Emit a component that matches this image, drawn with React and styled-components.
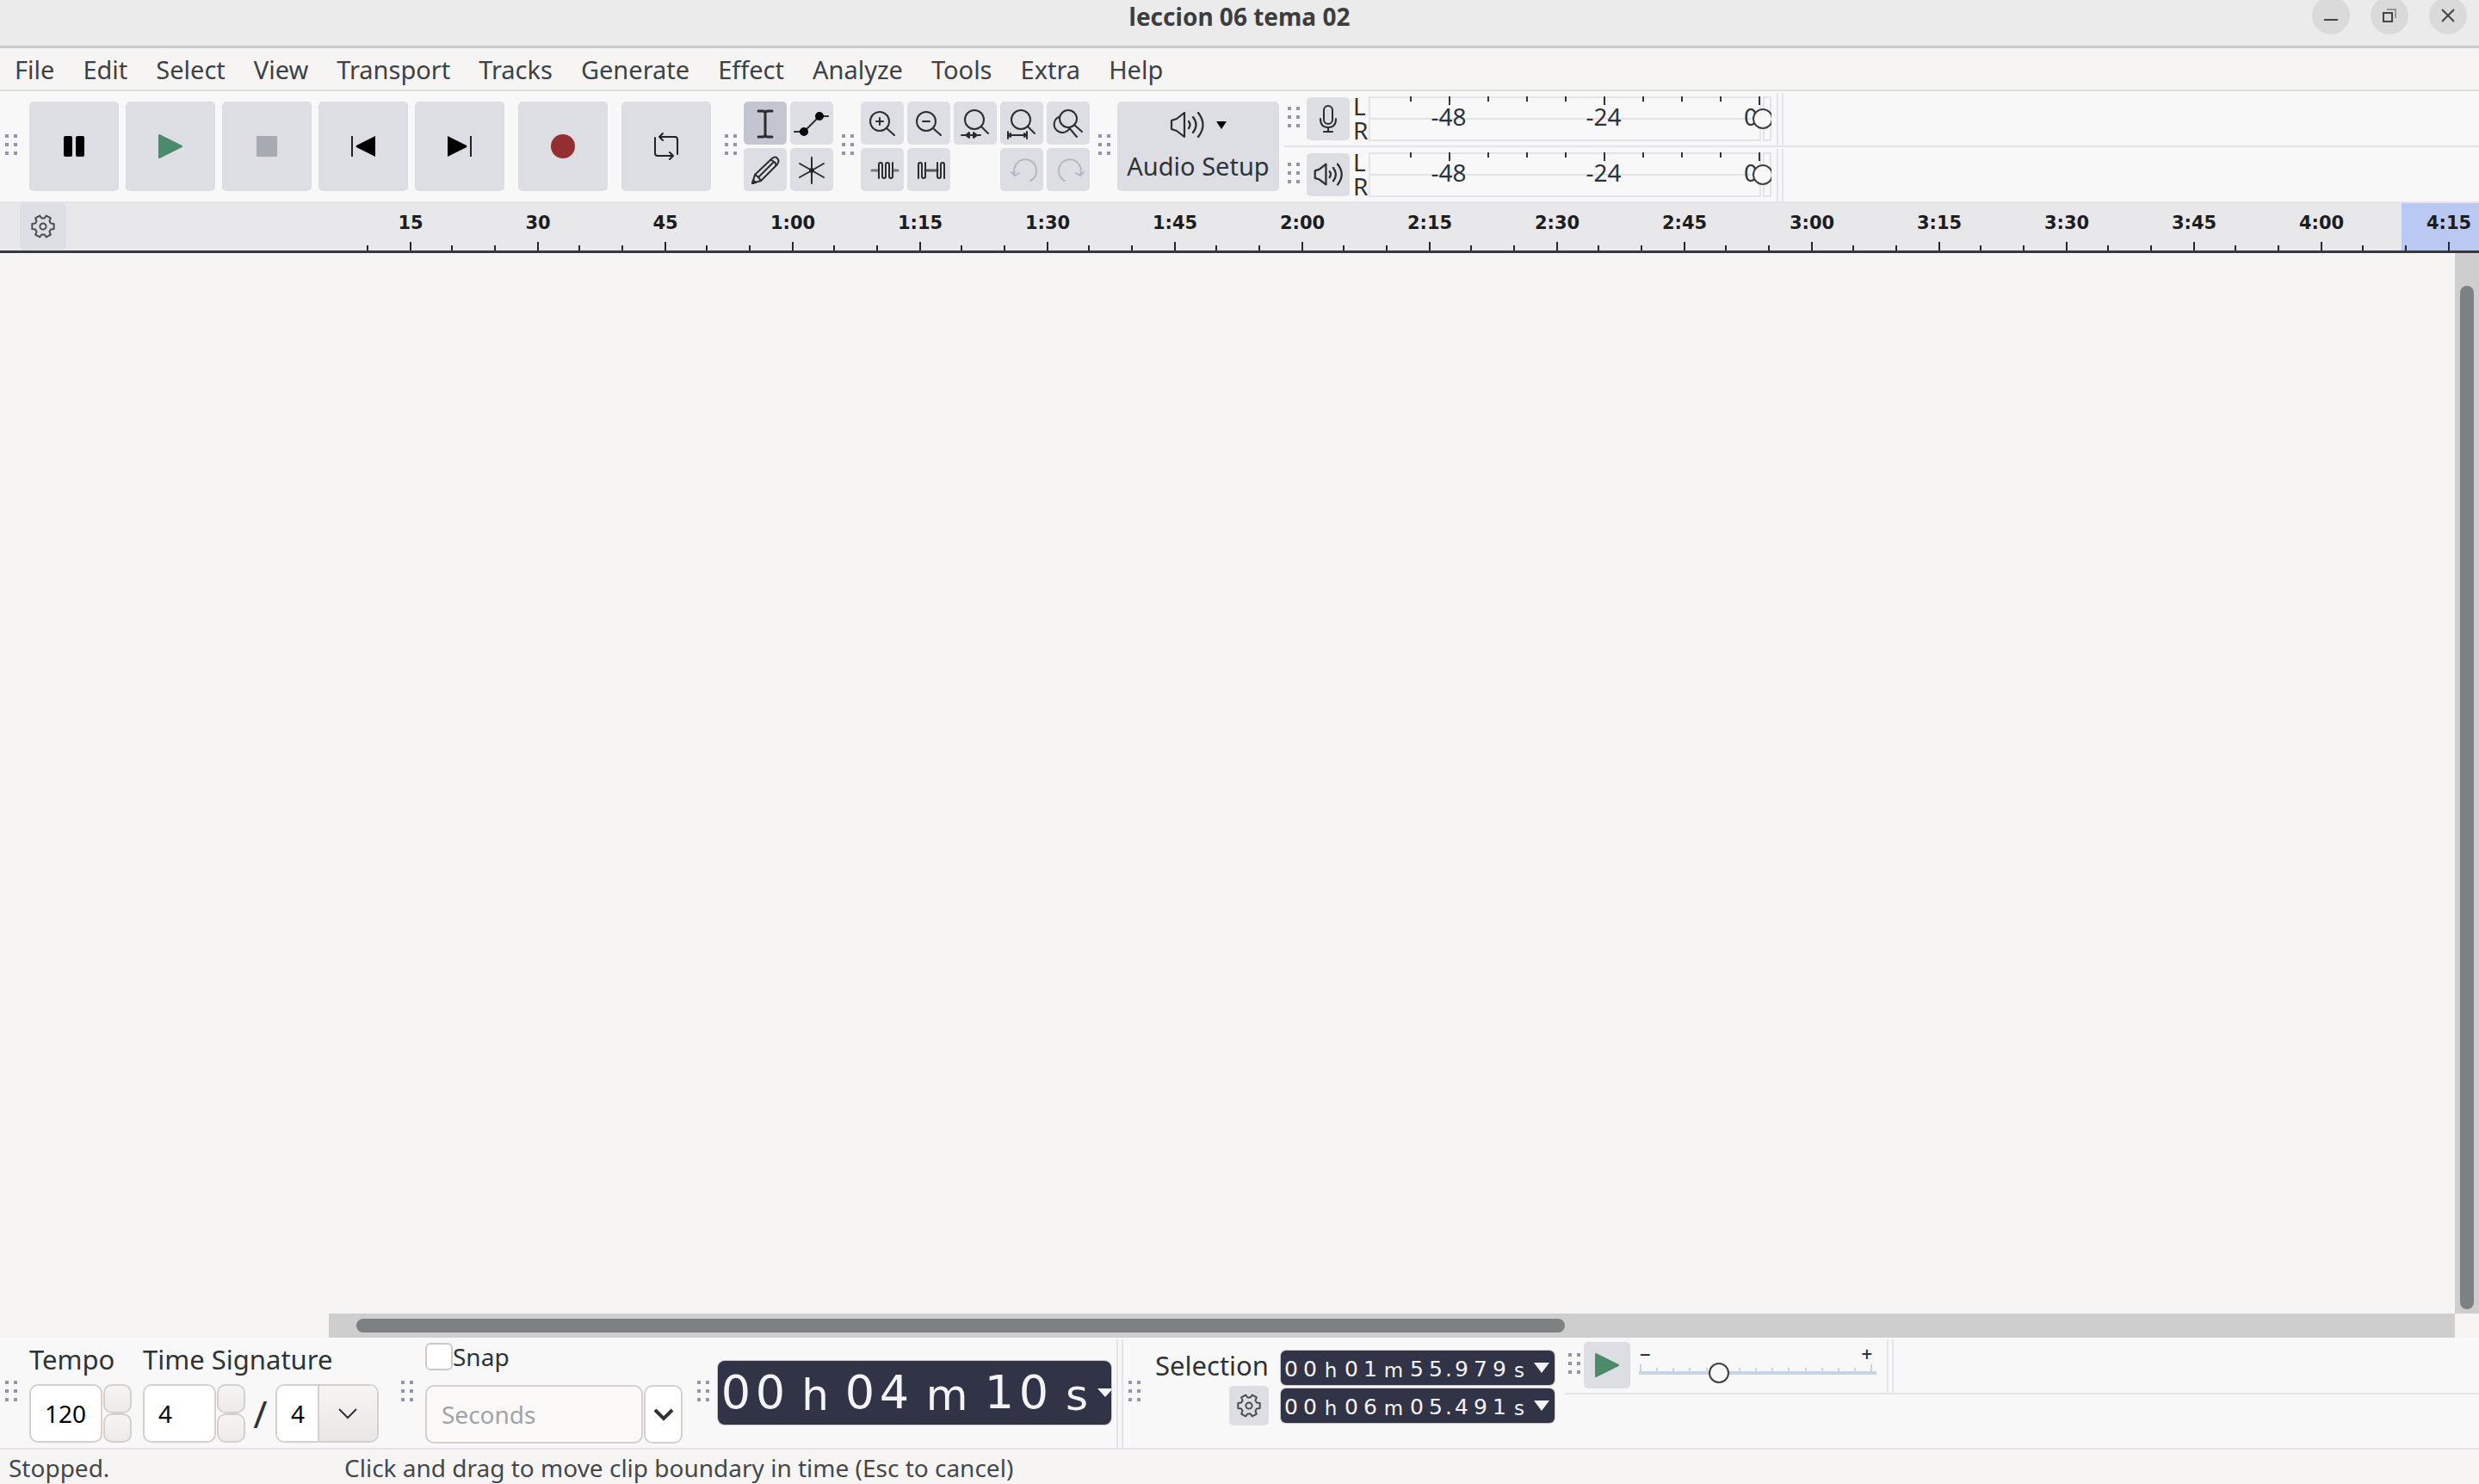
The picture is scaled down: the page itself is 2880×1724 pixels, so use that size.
import React, { useState } from "react"
import styled, { createGlobalStyle, css } from "styled-components"

const GlobalStyle = createGlobalStyle`
    * {
        box-sizing: border-box;
    }

    body {
        margin: 0;
        font-family: "Noto Sans", "Open Sans", sans-serif;
        font-size: 28px;
        line-height: 40px;
        color: #2e3436;
        background: #f6f5f3;
    }

    button,
    input,
    select {
        font: inherit;
        color: inherit;
        margin: 0;
    }
`

const menuItems = [
    "File",
    "Edit",
    "Select",
    "View",
    "Transport",
    "Tracks",
    "Generate",
    "Effect",
    "Analyze",
    "Tools",
    "Extra",
    "Help",
]

const rulerLabels = [
    "15",
    "30",
    "45",
    "1:00",
    "1:15",
    "1:30",
    "1:45",
    "2:00",
    "2:15",
    "2:30",
    "2:45",
    "3:00",
    "3:15",
    "3:30",
    "3:45",
    "4:00",
    "4:15",
]

// Six lobed outline, lobes on the horizontal axis
const gearPoints = [0, 60, 120, 180, 240, 300]
    .flatMap((angle) => [
        [angle - 21, 9.6],
        [angle - 13, 13],
        [angle + 13, 13],
        [angle + 21, 9.6],
    ])
    .map(([angle, radius]) => {
        const rad = (angle * Math.PI) / 180
        return `${(15 + radius * Math.cos(rad)).toFixed(2)},${(15 + radius * Math.sin(rad)).toFixed(2)}`
    })
    .join(" ")

/* Icons */

const GearIcon = () => (
    <svg width="30" height="30" fill="none" stroke="#4b4d52" strokeWidth="2" strokeLinejoin="round">
        <polygon points={gearPoints} />
        <circle cx="15" cy="15" r="3.6" />
    </svg>
)

const PauseIcon = () => (
    <svg width="32" height="32">
        <rect x="4" y="4" width="10" height="24" rx="2" />
        <rect x="18" y="4" width="10" height="24" rx="2" />
    </svg>
)

const PlayIcon = () => (
    <svg width="32" height="32">
        <path d="M3 3L29 16L3 29Z" fill="#4c8a6c" stroke="#4c8a6c" strokeWidth="2" strokeLinejoin="round" />
    </svg>
)

const StopIcon = () => (
    <svg width="32" height="32">
        <rect x="4" y="4" width="24" height="24" rx="1" fill="#a5aab3" />
    </svg>
)

const SkipIcon = ({ back }) => (
    <svg width="32" height="32">
        <g transform={back ? "translate(32 0) scale(-1 1)" : undefined}>
            <path d="M2 4L24 15Q25 16 24 17L2 28Z" />
            <path d="M29 4V28" stroke="#222" strokeWidth="2" />
        </g>
    </svg>
)

const RecordIcon = () => (
    <svg width="32" height="32">
        <circle cx="16" cy="16" r="14" fill="#942f2f" />
    </svg>
)

const LoopIcon = () => (
    <svg width="32" height="34" fill="none" stroke="#222" strokeWidth="2" strokeLinecap="round" strokeLinejoin="round">
        <path d="M3 7V25Q3 28 6 28H23" />
        <path d="M20 24L24 28L20 32" />
        <path d="M29 26V9Q29 6 26 6H9" />
        <path d="M12 2L8 6L12 10" />
    </svg>
)

const ToolSvg = styled.svg`
    display: block;
    width: 50px;
    height: 50px;
    fill: none;
    stroke: ${(p) => (p.$muted ? "#b3b9c2" : "#2b2c30")};
    stroke-width: 2;
    stroke-linecap: round;
    stroke-linejoin: round;
`

const SelectionToolIcon = () => (
    <ToolSvg>
        <path d="M17 11H22Q25 11 25 14V38Q25 41 22 41H17M33 11H28Q25 11 25 14M33 41H28Q25 41 25 38" strokeWidth="3" />
    </ToolSvg>
)

const EnvelopeIcon = () => (
    <ToolSvg>
        <path d="M5 35H16L34 17H44" />
        <circle cx="16" cy="35" r="4" fill="#000" stroke="#000" />
        <circle cx="34" cy="17" r="4" fill="#000" stroke="#000" />
    </ToolSvg>
)

const PencilIcon = () => (
    <ToolSvg>
        <path d="M10 41L13 31L33 12Q37 9 39 12Q42 15 39 19L20 38Z" />
        <path d="M13 31L16 33L18 35L20 38M17 34L34 17M31 14Q34 14 35 16Q38 17 37 20" />
        <path d="M10 41L11 37L14 40Z" fill="#2b2c30" />
    </ToolSvg>
)

const MultiToolIcon = () => (
    <ToolSvg>
        <path d="M25 11V41M11 18L39 34M11 34L39 18" />
        <circle cx="25" cy="26" r="2" fill="#000" />
    </ToolSvg>
)

const ZoomIcon = ({ kind }) => (
    <ToolSvg>
        {(kind === "in" || kind === "out") && (
            <>
                <circle cx="22" cy="23" r="11" />
                <path d="M30 31L39 39M18 23H26" />
                {kind === "in" && <path d="M22 19V27" />}
            </>
        )}
        {(kind === "selection" || kind === "project") && (
            <>
                <circle cx="24" cy="21" r="11" />
                <path d="M32 29L40 37" />
            </>
        )}
        {kind === "selection" && (
            <>
                <path d="M9 39H31" />
                <path d="M14 39L18 36V42ZM27 39L23 36V42Z" fill="#2b2c30" />
            </>
        )}
        {kind === "project" && (
            <>
                <path d="M9 35V43M31 35V43M9 39H31" />
                <path d="M10 39L12 37V41ZM30 39L28 37V41Z" fill="#2b2c30" />
            </>
        )}
        {kind === "toggle" && (
            <>
                <circle cx="25" cy="20" r="10" />
                <path d="M32 27L41 35M15 17.5A9.5 9.5 0 1 0 26.5 31L35 41M27 31V30" />
            </>
        )}
    </ToolSvg>
)

const TrimIcon = () => (
    <ToolSvg>
        <path d="M13 26H20M39 26H43" stroke="#77787c" strokeWidth="3" />
        <path d="M21 35V19Q21 17 23 17Q25 17 25 19V33Q25 35 27 35Q29 35 29 33V19Q29 17 31 17Q33 17 33 19V33Q33 35 35 35Q37 35 37 33V17" />
    </ToolSvg>
)

const SilenceIcon = () => (
    <ToolSvg>
        <path d="M21 26H35" stroke="#55565a" strokeWidth="3" />
        <path d="M13 35V19Q13 17 15 17Q17 17 17 19V33Q17 35 19 35Q21 35 21 33V17" />
        <path d="M35 17V33Q35 35 37 35Q39 35 39 33V19Q39 17 41 17Q43 17 43 19V35" />
    </ToolSvg>
)

const UndoIcon = ({ redo }) => (
    <ToolSvg $muted>
        <g transform={redo ? "translate(56 0) scale(-1 1)" : undefined}>
            <path d="M35 38A13 13 0 1 0 17 31" />
            <path d="M13 28L17 32L22 29" />
        </g>
    </ToolSvg>
)

const SpeakerIcon = ({ size = 40 }) => (
    <svg
        width={size}
        height={(size * 4) / 5}
        viewBox="0 0 40 32"
        fill="none"
        stroke="#2b2c30"
        strokeWidth={size < 40 ? 2.6 : 2.2}
        strokeLinecap="round"
        strokeLinejoin="round"
    >
        <path d="M2 11L8 9L17 2V30L8 23L2 21Z" />
        <path d="M22 12Q25 16 22 20M27 7Q34 16 27 25M33 2Q44 16 33 30" />
    </svg>
)

const MicIcon = () => (
    <svg width="22" height="34" fill="none" stroke="#2b2c30" strokeWidth="2" strokeLinecap="round">
        <rect x="6" y="2" width="10" height="21" rx="5" />
        <path d="M2 17Q2 27 11 27Q20 27 20 17M11 27V32M6 32H16" />
    </svg>
)

const CaretIcon = ({ width, height, color = "#000" }) => (
    <svg width={width} height={height} viewBox="0 0 20 10" preserveAspectRatio="none">
        <path d="M0 0H20L10 10Z" fill={color} />
    </svg>
)

const ChevronIcon = ({ bold }) => (
    <svg width="24" height="18" fill="none" stroke="#2e3436" strokeWidth={bold ? 4 : 2}>
        <path d="M2 4L12 14L22 4" />
    </svg>
)

/* Small building blocks */

const GripDots = () => (
    <Grip aria-hidden="true">
        <span />
        <span />
        <span />
        <span />
        <span />
        <span />
    </Grip>
)

const Meter = ({ name, icon }) => {
    const [level, setLevel] = useState(100)

    return (
        <>
            <GripDots />
            <FlatButton aria-label={name} $size={50}>
                {icon}
            </FlatButton>
            <Channels>
                <span>L</span>
                <span>R</span>
            </Channels>
            <MeterArea>
                <svg width="468" height="52">
                    <path d="M1 1H455V51H1ZM1 26H455M459 1H467V51H459Z" fill="none" stroke="#e3e3e8" strokeWidth="2" />
                    {Array.from({ length: 10 }, (_, i) => (
                        <rect key={i} x={48 + i * 45} y="0" width="2" height={i % 4 === 1 ? 10 : 6} fill="#333" />
                    ))}
                    <text x="93" y="34" textAnchor="middle">
                        -48
                    </text>
                    <text x="273" y="34" textAnchor="middle">
                        -24
                    </text>
                    <text x="444" y="34" textAnchor="middle">
                        0
                    </text>
                </svg>
                <MeterSlider
                    type="range"
                    aria-label={`${name} volume`}
                    value={level}
                    onChange={(e) => setLevel(Number(e.target.value))}
                />
            </MeterArea>
        </>
    )
}

const TimeDisplay = ({ value, label, large }) => (
    <TimeBox $large={large} role="group" aria-label={label}>
        {value.split("").map((char, index) => (
            <TimeCell key={index} $char={char} $large={large}>
                {char}
            </TimeCell>
        ))}
        <TimeMenu aria-label={`${label} format`} $large={large}>
            <CaretIcon width={18} height={large ? 10 : 12} color="#f4f4f6" />
        </TimeMenu>
    </TimeBox>
)

const Spinner = ({ id, value, onChange }) => (
    <SpinRow>
        <SpinInput id={id} value={value} onChange={(e) => onChange(e.target.value)} />
        <Steppers>
            <StepButton aria-label="Increase" onClick={() => onChange(Number(value) + 1)} />
            <StepButton aria-label="Decrease" onClick={() => onChange(Number(value) - 1)} />
        </Steppers>
    </SpinRow>
)

const App = () => {
    const [tempo, setTempo] = useState(120)
    const [upper, setUpper] = useState(4)
    const [lower, setLower] = useState(4)
    const [snap, setSnap] = useState(false)
    const [speed, setSpeed] = useState(32)

    return (
        <Window>
            <GlobalStyle />

            <TitleBar>
                <Title>leccion 06 tema 02</Title>
                <WindowButtons>
                    <WindowButton aria-label="Minimize">
                        <svg width="20" height="20">
                            <path d="M2 15H18" stroke="#444" strokeWidth="2" />
                        </svg>
                    </WindowButton>
                    <WindowButton aria-label="Restore">
                        <svg width="20" height="20" fill="none" strokeWidth="2">
                            <path d="M7 3H17V13" stroke="#999" />
                            <path d="M3 7H13V17H3Z" stroke="#444" />
                        </svg>
                    </WindowButton>
                    <WindowButton aria-label="Close">
                        <svg width="20" height="20">
                            <path d="M3 3L17 17M17 3L3 17" stroke="#444" strokeWidth="2" />
                        </svg>
                    </WindowButton>
                </WindowButtons>
            </TitleBar>

            <MenuBar>
                {menuItems.map((item) => (
                    <MenuButton key={item}>{item}</MenuButton>
                ))}
            </MenuBar>

            <Dock>
                <GripDots />
                <Transport>
                    <ButtonRun>
                        <TransportButton aria-label="Pause">
                            <PauseIcon />
                        </TransportButton>
                        <TransportButton aria-label="Play">
                            <PlayIcon />
                        </TransportButton>
                        <TransportButton aria-label="Stop" disabled>
                            <StopIcon />
                        </TransportButton>
                        <TransportButton aria-label="Skip to start">
                            <SkipIcon back />
                        </TransportButton>
                        <TransportButton aria-label="Skip to end">
                            <SkipIcon />
                        </TransportButton>
                    </ButtonRun>
                    <TransportButton aria-label="Record">
                        <RecordIcon />
                    </TransportButton>
                    <TransportButton aria-label="Loop">
                        <LoopIcon />
                    </TransportButton>
                </Transport>

                <GripDots />
                <ToolGrid $columns={2}>
                    <FlatButton aria-label="Selection tool" $size={50} $active>
                        <SelectionToolIcon />
                    </FlatButton>
                    <FlatButton aria-label="Envelope tool" $size={50}>
                        <EnvelopeIcon />
                    </FlatButton>
                    <FlatButton aria-label="Draw tool" $size={50}>
                        <PencilIcon />
                    </FlatButton>
                    <FlatButton aria-label="Multi-tool" $size={50}>
                        <MultiToolIcon />
                    </FlatButton>
                </ToolGrid>

                <GripDots />
                <ToolGrid $columns={5}>
                    {["in", "out", "selection", "project", "toggle"].map((kind) => (
                        <FlatButton key={kind} aria-label={`Zoom ${kind}`} $size={50}>
                            <ZoomIcon kind={kind} />
                        </FlatButton>
                    ))}
                    <FlatButton aria-label="Trim" $size={50}>
                        <TrimIcon />
                    </FlatButton>
                    <FlatButton aria-label="Silence" $size={50}>
                        <SilenceIcon />
                    </FlatButton>
                    <span />
                    <FlatButton aria-label="Undo" $size={50} disabled>
                        <UndoIcon />
                    </FlatButton>
                    <FlatButton aria-label="Redo" $size={50} disabled>
                        <UndoIcon redo />
                    </FlatButton>
                </ToolGrid>

                <GripDots />
                <AudioSetup>
                    <AudioSetupIcons>
                        <SpeakerIcon />
                        <CaretIcon width={12} height={9} />
                    </AudioSetupIcons>
                    Audio Setup
                </AudioSetup>

                <MeterDock>
                    <MeterRow>
                        <Meter name="Record meter" icon={<MicIcon />} />
                        <DockEnd />
                    </MeterRow>
                    <MeterRow>
                        <Meter name="Playback meter" icon={<SpeakerIcon size={34} />} />
                        <DockEnd />
                    </MeterRow>
                </MeterDock>
            </Dock>

            <Ruler>
                <RulerHead>
                    <FlatButton aria-label="Timeline options" $size={54}>
                        <GearIcon />
                    </FlatButton>
                </RulerHead>
                {rulerLabels.map((label) => (
                    <RulerCell key={label}>
                        {label}
                        <svg width="148" height="10" fill="#26272b">
                            <rect x="23" y="4" width="2" height="6" />
                            <rect x="73" y="0" width="2" height="10" />
                            <rect x="121" y="4" width="2" height="6" />
                        </svg>
                    </RulerCell>
                ))}
                <RulerSelection />
            </Ruler>

            <Workspace>
                <TrackArea />
                <VerticalScroll>
                    <VerticalThumb />
                </VerticalScroll>
            </Workspace>
            <HorizontalScroll>
                <HorizontalThumb />
            </HorizontalScroll>

            <Dock>
                <GripDots />
                <FieldGroup>
                    <Field>
                        <FieldLabel htmlFor="tempo">Tempo</FieldLabel>
                        <Spinner id="tempo" value={tempo} onChange={setTempo} />
                    </Field>
                    <Field>
                        <FieldLabel htmlFor="upper">Time Signature</FieldLabel>
                        <SpinRow>
                            <Spinner id="upper" value={upper} onChange={setUpper} />
                            <Slash>/</Slash>
                            <Combo>
                                <ComboInput
                                    aria-label="Lower time signature"
                                    value={lower}
                                    onChange={(e) => setLower(e.target.value)}
                                />
                                <ComboButton aria-label="Choose lower time signature">
                                    <ChevronIcon />
                                </ComboButton>
                            </Combo>
                        </SpinRow>
                    </Field>
                </FieldGroup>

                <GripDots />
                <SnapGroup>
                    <SnapLabel>
                        <Checkbox type="checkbox" checked={snap} onChange={(e) => setSnap(e.target.checked)} />
                        Snap
                    </SnapLabel>
                    <SpinRow>
                        <SnapInput aria-label="Snap to" value="Seconds" disabled readOnly />
                        <SnapButton aria-label="Choose snap unit">
                            <ChevronIcon bold />
                        </SnapButton>
                    </SpinRow>
                </SnapGroup>

                <GripDots />
                <TimeDisplay large label="Audio position" value="00h04m10s" />
                <DockEnd />

                <GripDots />
                <SelectionGrid>
                    <FieldLabel as="span">Selection</FieldLabel>
                    <TimeDisplay label="Selection start" value="00h01m55.979s" />
                    <FlatButton aria-label="Selection options" $size={46}>
                        <GearIcon />
                    </FlatButton>
                    <TimeDisplay label="Selection end" value="00h06m05.491s" />
                </SelectionGrid>

                <SpeedDock>
                    <SpeedRow>
                        <GripDots />
                        <FlatButton aria-label="Play at speed" $size={54}>
                            <PlayIcon />
                        </FlatButton>
                        <SpeedControl>
                            <SpeedSigns>
                                <span>−</span>
                                <span>+</span>
                            </SpeedSigns>
                            <SpeedScale>
                                <svg width="276" height="12" fill="#c5d5e6">
                                    {Array.from({ length: 15 }, (_, i) => {
                                        const end = i % 14 === 0
                                        return (
                                            <rect
                                                key={i}
                                                x={Math.round(1 + i * 19.15)}
                                                y={end ? 0 : 4}
                                                width="2"
                                                height={end ? 9 : 5}
                                            />
                                        )
                                    })}
                                    <rect x="0" y="8" width="276" height="4" />
                                </svg>
                                <SpeedSlider
                                    type="range"
                                    aria-label="Playback speed"
                                    value={speed}
                                    onChange={(e) => setSpeed(Number(e.target.value))}
                                />
                            </SpeedScale>
                        </SpeedControl>
                        <DockEnd />
                    </SpeedRow>
                </SpeedDock>
            </Dock>

            <StatusBar>
                <StatusState>Stopped.</StatusState>
                <span>Click and drag to move clip boundary in time (Esc to cancel)</span>
            </StatusBar>
        </Window>
    )
}

/* Window frame */

const Window = styled.div`
    display: flex;
    flex-direction: column;
    min-height: 100vh;
    overflow: hidden;
`

const TitleBar = styled.header`
    display: grid;
    grid-template-columns: 1fr auto 1fr;
    height: 56px;
    overflow: hidden;
    background: #ebebeb;
    border-bottom: 3px solid #cbcbcb;
`

const Title = styled.h1`
    grid-column: 2;
    margin: 0;
    font-size: 28px;
    font-weight: bold;
    line-height: 38px;
    color: #3d3d3d;
`

const WindowButtons = styled.div`
    display: flex;
    justify-content: flex-end;
    gap: 24px;
    margin-top: -4px;
    padding-right: 14px;
`

const WindowButton = styled.button`
    display: flex;
    align-items: center;
    justify-content: center;
    width: 44px;
    height: 44px;
    padding: 0;
    border: none;
    border-radius: 50%;
    background: #dadada;
`

const MenuBar = styled.nav`
    display: flex;
    gap: 33px;
    height: 50px;
    padding-left: 17px;
    border-bottom: 2px solid #e1dfdc;
    font-size: 29px;
    color: #3d4245;
`

const MenuButton = styled.button`
    padding: 2px 0 0;
    border: none;
    background: none;
`

/* Toolbars */

const Dock = styled.section`
    display: flex;
    align-items: center;
    height: 130px;
    background: #f8f8f8;
    border-bottom: 2px solid #e3e3e8;
`

const Grip = styled.div`
    display: grid;
    grid-template-columns: 4px 4px;
    gap: 6px;
    flex: none;
    margin: 0 8px 4px 6px;

    span {
        height: 4px;
        background: #9296ab;
    }
`

const buttonFace = css`
    display: flex;
    align-items: center;
    justify-content: center;
    flex: none;
    padding: 0;
    border: none;
    border-radius: 5px;
    background: #dddee3;
`

const Transport = styled.div`
    display: flex;
    gap: 16px;
    padding: 0 10px 0 6px;
`

const ButtonRun = styled.div`
    display: flex;
    gap: 8px;
`

const TransportButton = styled.button`
    ${buttonFace}
    width: 104px;
    height: 104px;
`

const FlatButton = styled.button`
    ${buttonFace}
    width: ${(p) => p.$size}px;
    height: ${(p) => p.$size}px;
    background: ${(p) => (p.$active ? "#c3c5d1" : "#dddee3")};
`

const ToolGrid = styled.div`
    display: grid;
    grid-template-columns: repeat(${(p) => p.$columns}, 50px);
    gap: 4px;
    margin-right: 4px;
`

const AudioSetup = styled.button`
    ${buttonFace}
    flex-direction: column;
    gap: 10px;
    width: 188px;
    height: 104px;
    font-size: 29px;
    line-height: 40px;
`

const AudioSetupIcons = styled.span`
    display: flex;
    align-items: center;
    gap: 14px;
    height: 36px;
`

const DockEnd = styled.div`
    align-self: stretch;
    flex: none;
    width: 8px;
    margin: 2px 0 0 6px;
    border: solid #e3e3e8;
    border-width: 0 2px;
`

/* Meters */

const MeterDock = styled.div`
    display: flex;
    flex-direction: column;
    flex: 1;
    align-self: stretch;
    margin-left: 6px;
`

const MeterRow = styled.div`
    display: flex;
    align-items: center;
    flex: 1;

    &:first-child {
        border-bottom: 2px solid #e3e3e8;
    }

    > ${Grip} {
        margin-left: 4px;
    }
`

const Channels = styled.div`
    display: flex;
    flex-direction: column;
    width: 18px;
    margin: 0 0 2px 4px;
    line-height: 28px;
`

const MeterArea = styled.div`
    position: relative;
    flex: none;
    width: 468px;
    height: 52px;
    overflow: hidden;

    svg {
        display: block;
    }

    text {
        fill: #2e3436;
    }
`

const thumb = css`
    appearance: none;
    width: 24px;
    height: 24px;
    border: 2px solid #3f4043;
    border-radius: 50%;
    background: #f8f8f8;
`

// The thumb rests on the 0 dB mark, so the track runs a little past the meter
const MeterSlider = styled.input`
    appearance: none;
    position: absolute;
    top: 14px;
    left: 0;
    width: 470px;
    height: 24px;
    background: none;

    &::-webkit-slider-thumb {
        ${thumb}
    }
`

/* Timeline */

const Ruler = styled.div`
    position: relative;
    display: flex;
    height: 58px;
    overflow: hidden;
    background: #e8e8ea;
    border-bottom: 3px solid #38383a;
`

const RulerHead = styled.div`
    flex: none;
    width: 403px;
    padding-left: 23px;
`

const RulerCell = styled.div`
    display: flex;
    flex-direction: column;
    justify-content: space-between;
    flex: none;
    z-index: 1;
    width: 148px;
    padding-top: 1px;
    font-family: "DejaVu Sans", sans-serif;
    font-size: 21px;
    font-weight: bold;
    line-height: 44px;
    text-align: center;
    color: #1c1d22;

    svg {
        flex: none;
    }
`

const RulerSelection = styled.div`
    position: absolute;
    top: 0;
    bottom: 0;
    left: 2790px;
    right: 0;
    background: #b9c9f2;
`

const Workspace = styled.main`
    display: flex;
    flex: 1;
`

const TrackArea = styled.div`
    flex: 1;
    background: #f6f5f3;
`

const VerticalScroll = styled.div`
    display: flex;
    width: 28px;
    padding: 38px 6px 5px;
    background: #cecece;
`

const VerticalThumb = styled.div`
    flex: 1;
    border-radius: 8px;
    background: #7e8181;
`

const HorizontalScroll = styled.div`
    height: 28px;
    margin: 0 28px 0 382px;
    padding: 6px 0 6px 32px;
    background: #cecece;
`

const HorizontalThumb = styled.div`
    width: 1404px;
    height: 16px;
    border-radius: 8px;
    background: #7e8181;
`

/* Fields */

const FieldGroup = styled.div`
    display: flex;
    gap: 13px;
    margin: 0 20px 0 6px;
`

const Field = styled.div`
    display: flex;
    flex-direction: column;
    gap: 8px;
`

const FieldLabel = styled.label`
    font-size: 31px;
    line-height: 38px;
    padding-bottom: 2px;
    white-space: nowrap;
`

const SpinRow = styled.div`
    display: flex;
    align-items: center;
    gap: 1px;
`

const fieldBox = css`
    height: 68px;
    border: 2px solid #d5d0cc;
    border-radius: 10px;
    background: #fff;
`

const SpinInput = styled.input`
    ${fieldBox}
    width: 85px;
    padding: 0 0 0 16px;
    color: #000;
`

const Steppers = styled.div`
    display: flex;
    flex-direction: column;
`

const StepButton = styled.button`
    width: 33px;
    height: 34px;
    padding: 0;
    border: 2px solid #d5d0cc;
    border-radius: 10px;
    background: linear-gradient(#f6f5f4, #edebe9);
`

const Slash = styled.span`
    width: 33px;
    font-size: 44px;
    text-align: center;
`

const Combo = styled.div`
    ${fieldBox}
    display: flex;
    width: 120px;
    overflow: hidden;
`

const ComboInput = styled.input`
    width: 47px;
    padding: 0 0 0 16px;
    border: none;
    color: #000;
`

const ComboButton = styled.button`
    display: flex;
    align-items: center;
    justify-content: center;
    flex: 1;
    padding: 0 2px 0 0;
    border: none;
    border-left: 2px solid #d5d0cc;
    background: linear-gradient(#f6f5f4, #e9e7e5);
`

const SnapGroup = styled.div`
    display: flex;
    flex-direction: column;
    gap: 13px;
    margin: 0 11px 3px 6px;
`

const SnapLabel = styled.label`
    display: flex;
    align-items: center;
    height: 40px;
`

const Checkbox = styled.input`
    appearance: none;
    width: 32px;
    height: 32px;
    border: 2px solid #cfc9c4;
    border-radius: 6px;
    background: #fff;

    &:checked {
        background: #7e8181;
    }
`

const SnapInput = styled.input`
    ${fieldBox}
    width: 253px;
    padding: 0 0 0 17px;
    background: #faf9f8;
    color: #a0a4a6;
`

const SnapButton = styled.button`
    ${fieldBox}
    display: flex;
    align-items: center;
    justify-content: center;
    width: 45px;
    padding: 0;
`

/* Time displays */

const TimeBox = styled.div`
    display: flex;
    align-items: center;
    flex: none;
    width: ${(p) => (p.$large ? 457 : 318)}px;
    height: ${(p) => (p.$large ? 74 : 40)}px;
    margin-left: ${(p) => (p.$large ? 2 : 0)}px;
    padding: ${(p) => (p.$large ? 0 : 3)}px 0 0 1px;
    overflow: hidden;
    border-radius: ${(p) => (p.$large ? 8 : 6)}px;
    background: #313446;
    box-shadow: 0 0 0 1px #cfc8c6;
    font-family: "DejaVu Sans", sans-serif;
    color: #f4f4f6;
`

const cellWidths = {
    large: { h: 64, m: 82, s: 60, digit: 40 },
    small: { h: 26, m: 32, s: 24, ".": 8, digit: 22 },
}

const cellWidth = (p) => {
    const widths = p.$large ? cellWidths.large : cellWidths.small
    return widths[p.$char] || widths.digit
}

const TimeCell = styled.span`
    display: flex;
    justify-content: center;
    flex: none;
    width: ${cellWidth}px;
    font-size: ${(p) => (p.$large ? 54 : 25)}px;

    ${(p) =>
        /[hms]/.test(p.$char) &&
        css`
            padding-top: ${p.$large ? 6 : 2}px;
            font-size: ${p.$large ? 50 : 23}px;
        `}
`

const TimeMenu = styled.button`
    display: flex;
    align-items: center;
    flex: none;
    margin-left: ${(p) => (p.$large ? -6 : 5)}px;
    padding: 0 0 ${(p) => (p.$large ? 0 : 3)}px;
    border: none;
    background: none;
`

const SelectionGrid = styled.div`
    display: grid;
    grid-template-columns: 134px auto;
    grid-template-rows: 40px 40px;
    align-items: center;
    justify-items: end;
    gap: 4px 14px;
    margin: 0 0 14px 7px;

    > ${FieldLabel} {
        padding-bottom: 6px;
    }
`

/* Playback speed */

const SpeedDock = styled.div`
    flex: 1;
    align-self: stretch;
    margin-left: 12px;
`

const SpeedRow = styled.div`
    display: flex;
    align-items: center;
    height: 66px;
    border-bottom: 2px solid #e3e3e8;

    > ${Grip} {
        margin-left: 4px;
        margin-right: 4px;
    }
`

const SpeedControl = styled.div`
    display: flex;
    flex-direction: column;
    width: 276px;
    margin: 0 6px 5px 10px;
`

const SpeedSigns = styled.div`
    display: flex;
    justify-content: space-between;
    padding: 0 4px 0 0;
    font-family: "DejaVu Sans", sans-serif;
    font-size: 17px;
    font-weight: bold;
    line-height: 20px;
`

const SpeedScale = styled.div`
    position: relative;
    height: 22px;
    padding-top: 2px;

    svg {
        display: block;
    }
`

const SpeedSlider = styled.input`
    appearance: none;
    position: absolute;
    top: 0;
    left: 0;
    width: 100%;
    height: 24px;
    background: none;

    &::-webkit-slider-thumb {
        ${thumb}
    }
`

/* Status bar */

const StatusBar = styled.footer`
    display: flex;
    height: 40px;
    padding: 2px 8px 0 10px;
    line-height: 38px;
    color: #43484b;
    white-space: nowrap;
`

const StatusState = styled.span`
    width: 390px;
`

export default App
